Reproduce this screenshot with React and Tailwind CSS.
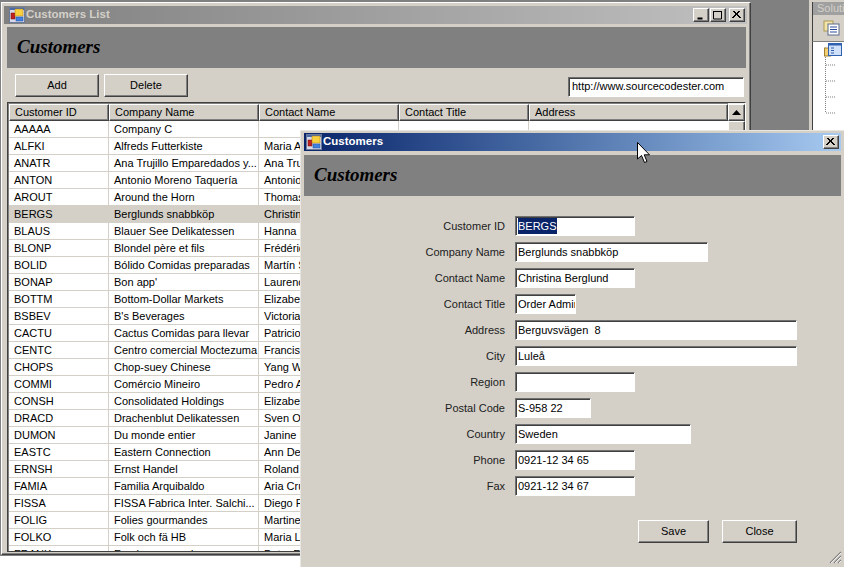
const FONT = { fontFamily: '"Liberation Sans", Arial, sans-serif' };

const rows = [
  ["AAAAA", "Company C", ""],
  ["ALFKI", "Alfreds Futterkiste", "Maria Anders"],
  ["ANATR", "Ana Trujillo Emparedados y...", "Ana Trujillo"],
  ["ANTON", "Antonio Moreno Taquería", "Antonio Moreno"],
  ["AROUT", "Around the Horn", "Thomas Hardy"],
  ["BERGS", "Berglunds snabbköp", "Christina Berglund"],
  ["BLAUS", "Blauer See Delikatessen", "Hanna Moos"],
  ["BLONP", "Blondel père et fils", "Frédérique Citeaux"],
  ["BOLID", "Bólido Comidas preparadas", "Martín Sommer"],
  ["BONAP", "Bon app'", "Laurence Lebihan"],
  ["BOTTM", "Bottom-Dollar Markets", "Elizabeth Lincoln"],
  ["BSBEV", "B's Beverages", "Victoria Ashworth"],
  ["CACTU", "Cactus Comidas para llevar", "Patricio Simpson"],
  ["CENTC", "Centro comercial Moctezuma", "Francisco Chang"],
  ["CHOPS", "Chop-suey Chinese", "Yang Wang"],
  ["COMMI", "Comércio Mineiro", "Pedro Afonso"],
  ["CONSH", "Consolidated Holdings", "Elizabeth Brown"],
  ["DRACD", "Drachenblut Delikatessen", "Sven Ottlieb"],
  ["DUMON", "Du monde entier", "Janine Labrune"],
  ["EASTC", "Eastern Connection", "Ann Devon"],
  ["ERNSH", "Ernst Handel", "Roland Mendel"],
  ["FAMIA", "Familia Arquibaldo", "Aria Cruz"],
  ["FISSA", "FISSA Fabrica Inter. Salchi...", "Diego Roel"],
  ["FOLIG", "Folies gourmandes", "Martine Rancé"],
  ["FOLKO", "Folk och fä HB", "Maria Larsson"],
  ["FRANK", "Frankenversand", "Peter Franken"],
];

const fields = [
  ["Customer ID", "BERGS", "w-[120px]", true],
  ["Company Name", "Berglunds snabbköp", "w-[193px]"],
  ["Contact Name", "Christina Berglund", "w-[120px]"],
  ["Contact Title", "Order Admin", "w-[61px]"],
  ["Address", "Berguvsvägen  8", "w-[282px]"],
  ["City", "Luleå", "w-[282px]"],
  ["Region", "", "w-[120px]"],
  ["Postal Code", "S-958 22", "w-[76px]"],
  ["Country", "Sweden", "w-[176px]"],
  ["Phone", "0921-12 34 65", "w-[120px]"],
  ["Fax", "0921-12 34 67", "w-[120px]"],
];

const raised =
  "border border-t-white border-l-white border-r-[#404040] border-b-[#404040] shadow-[inset_-1px_-1px_0_#808080] bg-[#d4d0c8]";
const sunken =
  "border border-t-[#707070] border-l-[#707070] border-r-white border-b-white shadow-[inset_1px_1px_0_#404040] bg-white";

function AppIcon() {
  return (
    <svg width="16" height="16" viewBox="0 0 16 16" className="shrink-0">
      <rect x="0.5" y="0.5" width="15" height="15" fill="#d8d8e8" stroke="#6a7a9a" />
      <rect x="1" y="1" width="14" height="2" fill="#4a6aa8" />
      <rect x="2" y="6" width="4" height="6" fill="#c02020" stroke="#701010" strokeWidth="0.5" />
      <rect x="6" y="2" width="8" height="7" fill="#f8d040" stroke="#b08010" strokeWidth="0.5" />
      <rect x="7" y="10" width="7" height="4" fill="#4080e0" stroke="#2050a0" strokeWidth="0.5" />
    </svg>
  );
}

function CaptionButton({ type, className = "" }) {
  return (
    <div className={`w-4 h-[14px] flex items-center justify-center ${raised} ${className}`}>
      <svg width="10" height="10" viewBox="0 0 10 10" fill="none" stroke="#000">
        {type === "min" && <path d="M1.500 8.500h5" strokeWidth="2" />}
        {type === "max" && <path d="M0.500 1.500h8M0.500 1v8h8V1" strokeWidth="1" />}
        {type === "close" && <path d="M1 1l7 7M8 1l-7 7M2 1l7 7M7 1l-7 7" strokeWidth="1" />}
      </svg>
    </div>
  );
}

function Banner({ className = "" }) {
  return (
    <div className={`h-[41px] bg-[#808080] flex items-center ${className}`}>
      <span
        className="text-[19px] font-bold italic text-black"
        style={{ fontFamily: '"Liberation Serif", "Times New Roman", serif' }}
      >
        Customers
      </span>
    </div>
  );
}

function Button({ children, className = "" }) {
  return (
    <div className={`h-[23px] flex items-center justify-center text-[11px] text-black ${raised} ${className}`}>
      {children}
    </div>
  );
}

function Cell({ children, className = "" }) {
  return (
    <div className={`h-full shrink-0 border-r border-[#d4d0c8] pl-[5px] overflow-hidden whitespace-nowrap flex items-center ${className}`}>
      {children}
    </div>
  );
}

function HeadCell({ children, className = "" }) {
  return (
    <div className={`h-full shrink-0 pl-[5px] flex items-center whitespace-nowrap ${raised} ${className}`}>
      {children}
    </div>
  );
}

function CustomersList() {
  return (
    <div className="absolute left-[1px] top-[2px] w-[750px] h-[553px] bg-[#d4d0c8] border border-t-white border-l-white border-r-[#404040] border-b-[#404040] shadow-[inset_-1px_-1px_0_#808080] p-[2px] pr-[3px] flex flex-col overflow-hidden">
      <div className="h-[18px] mt-[1px] shrink-0 flex items-center pl-[5px] pr-[2px] gap-[1px] bg-gradient-to-r from-[#808080] to-[#c0c0c0]">
        <AppIcon />
        <span className="text-[11.5px] font-bold text-[#d4d0c8] grow">Customers List</span>
        <CaptionButton type="min" />
        <CaptionButton type="max" className="mr-[2px]" />
        <CaptionButton type="close" />
      </div>
      <Banner className="mt-[3px] ml-[3px] w-[739px] pl-[10px] shrink-0" />
      <div className="shrink-0 h-[34px] flex items-center pl-[11px] pr-[3px] gap-[5px]">
        <Button className="w-[84px]">Add</Button>
        <Button className="w-[84px]">Delete</Button>
        <div className={`ml-auto w-[176px] h-[20px] mt-[3px] flex items-center pl-[3px] text-[11px] text-black ${sunken}`}>
          http://www.sourcecodester.com
        </div>
      </div>
      <div className="ml-[3px] w-[739px] grow min-h-0 border border-[#404040] border-r-white shadow-[inset_1px_1px_0_#808080] bg-[#808080] overflow-hidden flex text-[11px] text-black">
        <div className="grow min-w-0 flex flex-col overflow-hidden pl-[1px] pt-[1px]">
          <div className="h-[17px] shrink-0 flex">
            <HeadCell className="w-[100px]">Customer ID</HeadCell>
            <HeadCell className="w-[150px]">Company Name</HeadCell>
            <HeadCell className="w-[140px]">Contact Name</HeadCell>
            <HeadCell className="w-[130px]">Contact Title</HeadCell>
            <HeadCell className="grow">Address</HeadCell>
          </div>
          {rows.map((r) => (
            <div
              key={r[0]}
              className={`h-[17px] shrink-0 flex border-b border-[#d4d0c8] ${r[0] === "BERGS" ? "bg-[#d4d0c8]" : "bg-white"}`}
            >
              <Cell className="w-[100px]">{r[0]}</Cell>
              <Cell className="w-[150px]">{r[1]}</Cell>
              <Cell className="w-[140px]">{r[2]}</Cell>
              <Cell className="w-[130px]" />
              <div className="grow" />
            </div>
          ))}
        </div>
        <div className="w-[17px] shrink-0 pt-[1px] flex flex-col bg-[#eeece8]">
          <div className={`h-[17px] shrink-0 flex items-center justify-center ${raised}`}>
            <svg width="9" height="5" viewBox="0 0 9 5"><path d="M4.500 0L9 5H0z" fill="#000" /></svg>
          </div>
          <div className={`h-[60px] shrink-0 ${raised}`} />
        </div>
      </div>
    </div>
  );
}

function CustomerDialog() {
  return (
    <div className="absolute left-[300px] top-[130px] w-[546px] h-[440px] bg-[#d4d0c8] border border-t-[#e8e6e0] border-l-[#e8e6e0] border-r-[#404040] border-b-[#808080] p-[2px] flex flex-col">
      <div className="h-[18px] shrink-0 flex items-center ml-[1px] pl-[2px] pr-[2px] gap-[1px] bg-gradient-to-r from-[#0a246a] to-[#a6caf0] w-[537px]">
        <AppIcon />
        <span className="text-[11.5px] font-bold text-white grow">Customers</span>
        <CaptionButton type="close" />
      </div>
      <Banner className="mt-[4px] ml-[1px] w-[537px] pl-[10px] shrink-0" />
      <div className="mt-[20px] flex flex-col gap-[6px] ml-[1px]">
        {fields.map(([label, value, w, sel]) => (
          <div key={label} className="h-[20px] flex items-center gap-[10px] text-[11px] text-black">
            <div className="w-[201px] text-right text-[#202020]">{label}</div>
            <div className={`h-[20px] flex items-center pl-[2px] overflow-hidden whitespace-pre ${w} ${sunken}`}>
              {sel ? <span className="bg-[#0a246a] text-white">{value}</span> : value}
            </div>
          </div>
        ))}
      </div>
      <div className="mt-[24px] flex ml-[335px] gap-[13px]">
        <Button className="w-[71px]">Save</Button>
        <Button className="w-[75px]">Close</Button>
      </div>
      <svg width="13" height="13" viewBox="0 0 13 13" className="absolute right-[3px] bottom-[5px]" stroke="#808080">
        <path d="M1 12L12 1M5 12l7-7M9 12l3-3" strokeWidth="1.200" />
        <path d="M2 12L12 2M6 12l6-6M10 12l2-2" stroke="#fff" strokeWidth="0.800" />
      </svg>
    </div>
  );
}

function SolutionPanel() {
  return (
    <div className="absolute left-[809px] top-0 w-[35px] h-[130px] bg-white border-l-[3px] border-[#d4d0c8] flex flex-col overflow-hidden">
      <div className="h-[2px] bg-[#d4d0c8] shrink-0" />
      <div className="h-[13px] shrink-0 bg-[#a0a0a0] text-[#d4d0c8] text-[11px] leading-[13px] pl-[4px] whitespace-nowrap border-l border-[#404040]">
        Solution Explorer
      </div>
      <div className="h-[27px] shrink-0 bg-[#d4d0c8] flex items-center pl-[10px] border-l border-[#404040] border-b border-b-[#808080]">
        <svg width="17" height="16" viewBox="0 0 17 16">
          <rect x="1" y="1" width="9" height="10" fill="#f4e4a8" stroke="#a89858" />
          <rect x="5" y="4" width="11" height="11" fill="#fff" stroke="#5a6a8a" />
          <path d="M7 7h7M7 9.500h7M7 12h7" stroke="#2a4a9a" />
        </svg>
      </div>
      <div className="grow border-l border-[#404040] pl-[11px] pt-[1px] relative">
        <svg width="18" height="14" viewBox="0 0 18 14" className="block">
          <rect x="0.500" y="5" width="6" height="8" fill="#f4d070" stroke="#a08030" />
          <rect x="4.500" y="0.500" width="13" height="12" fill="#cfe0f8" stroke="#3060b0" />
          <rect x="4.500" y="0.500" width="13" height="2" fill="#3060b0" />
          <path d="M7 5h3M7 7.500h3M7 10h3" stroke="#3060b0" />
        </svg>
        <svg width="12" height="60" viewBox="0 0 12 60" className="block">
          <path d="M1.500 0V56M2 8H11M2 24H11M2 40H11M2 56H11" stroke="#808080" strokeDasharray="1 1" fill="none" />
        </svg>
      </div>
    </div>
  );
}

function Cursor() {
  return (
    <svg width="14" height="22" viewBox="0 0 14 22" className="absolute left-[637px] top-[142px]">
      <path d="M0.500 0.500V17L4.500 13.500L7.500 20.500L10 19.500L7.200 12.800H12.500Z" fill="#fff" stroke="#000" />
    </svg>
  );
}

export default function App() {
  return (
    <div className="relative w-[844px] h-[567px] overflow-hidden bg-[#808080]" style={FONT}>
      <div className="absolute left-0 top-[556px] w-[844px] h-[11px] bg-white" />
      <SolutionPanel />
      <CustomersList />
      <CustomerDialog />
      <Cursor />
    </div>
  );
}
